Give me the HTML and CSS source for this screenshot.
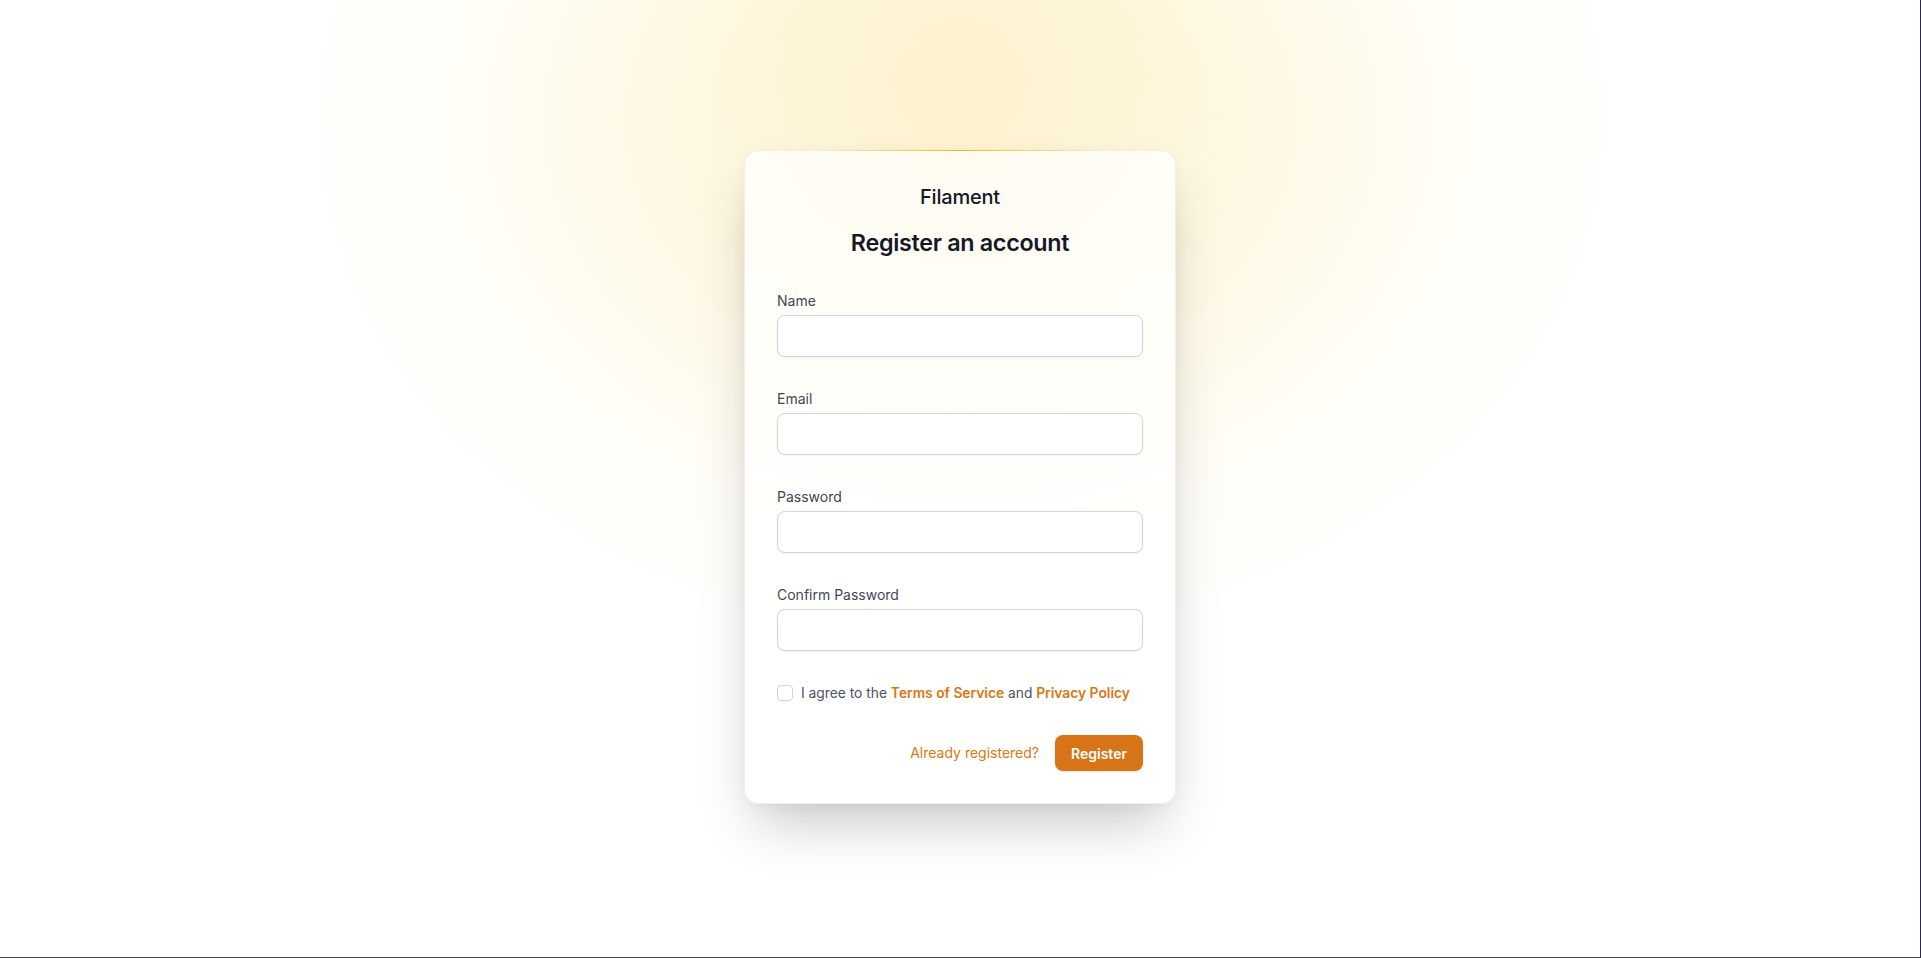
FILE: index.html
```html
<!DOCTYPE html>
<html lang="en">
<head>
<meta charset="utf-8">
<title>Register - Filament</title>
<link rel="stylesheet" href="styles.css">
</head>
<body>
<div class="frame">
  <main class="card">
    <div class="brand">Filament</div>
    <h1 class="title">Register an account</h1>
    <form class="form">
      <div class="field">
        <label class="label" for="name">Name</label>
        <input class="input" id="name" type="text">
      </div>
      <div class="field">
        <label class="label" for="email">Email</label>
        <input class="input" id="email" type="email">
      </div>
      <div class="field">
        <label class="label" for="password">Password</label>
        <input class="input" id="password" type="password">
      </div>
      <div class="field">
        <label class="label" for="confirm">Confirm Password</label>
        <input class="input" id="confirm" type="password">
      </div>
      <label class="agree">
        <span class="checkbox"></span>
        <span>I agree to the <a class="strong-link" href="#">Terms of Service</a> and <a class="strong-link" href="#">Privacy Policy</a></span>
      </label>
      <div class="actions">
        <a class="login-link" href="#">Already registered?</a>
        <button class="btn" type="button">Register</button>
      </div>
    </form>
  </main>
</div>
</body>
</html>
```
FILE: styles.css
```css
html, body {
  margin: 0;
  padding: 0;
}
body {
  font-family: "Inter", "Noto Sans", sans-serif;
  color: #111827;
  background-color: #ffffff;
  background-image:
    radial-gradient(ellipse 300px 180px at 50% 30px, rgba(251, 228, 160, 0.14), rgba(251, 228, 160, 0) 100%),
    radial-gradient(ellipse 700px 560px at 50% 120px, rgba(252, 234, 172, 0.55) 0%, rgba(252, 234, 172, 0.38) 35%, rgba(252, 234, 172, 0.12) 70%, rgba(252, 234, 172, 0) 100%);
  background-repeat: no-repeat;
}
.frame {
  box-sizing: border-box;
  height: 100vh;
  border-right: 1px solid #2b2553;
  border-bottom: 1px solid #444444;
  display: flex;
  flex-direction: column;
  align-items: center;
  padding-top: 150px;
}
.card {
  position: relative;
  box-sizing: border-box;
  width: 432px;
  padding: 32px;
  border-radius: 15px;
  background: rgba(255, 255, 255, 0.7);
  border: 1px solid rgba(0, 0, 0, 0.06);
  box-shadow: 0 30px 55px -12px rgba(0, 0, 0, 0.22), 0 4px 16px rgba(0, 0, 0, 0.03);
}
.card::before {
  content: "";
  position: absolute;
  top: -1px;
  left: 70px;
  right: 70px;
  height: 1px;
  background: linear-gradient(90deg, rgba(245, 180, 0, 0), rgba(245, 180, 0, 0.9) 50%, rgba(245, 180, 0, 0));
}
.brand {
  text-align: center;
  font-size: 20px;
  line-height: 28px;
  font-weight: 500;
  color: #161827;
  letter-spacing: -0.2px;
}
.title {
  margin: 16px 0 0;
  text-align: center;
  font-size: 23.3px;
  line-height: 32px;
  font-weight: 600;
  color: #161827;
  letter-spacing: -0.3px;
}
.form {
  margin-top: 32px;
  display: flex;
  flex-direction: column;
  gap: 32px;
}
.field {
  display: flex;
  flex-direction: column;
  gap: 4px;
}
.label {
  font-size: 14px;
  line-height: 20px;
  font-weight: 400;
  color: #3f4656;
}
.input {
  box-sizing: border-box;
  height: 42px;
  width: 100%;
  margin: 0;
  border: 1px solid #d3d5dc;
  border-radius: 8px;
  background: #ffffff;
  box-shadow: 0 1px 2px rgba(0, 0, 0, 0.06);
  font: inherit;
  padding: 0 12px;
}
.agree {
  display: flex;
  align-items: center;
  gap: 8px;
  font-size: 13.8px;
  line-height: 20px;
  color: #4b5263;
}
.checkbox {
  box-sizing: border-box;
  width: 16px;
  height: 16px;
  flex: none;
  border: 1px solid #d1d5db;
  border-radius: 4px;
  background: #ffffff;
  box-shadow: 0 1px 2px rgba(0, 0, 0, 0.05);
}
.strong-link {
  color: #d97712;
  font-weight: 600;
  text-decoration: none;
}
.actions {
  display: flex;
  justify-content: flex-end;
  align-items: center;
  gap: 16px;
}
.login-link {
  font-size: 14px;
  line-height: 20px;
  color: #d97712;
  text-decoration: none;
}
.btn {
  height: 36px;
  padding: 0 16px;
  border: none;
  border-radius: 8px;
  background: #d67417;
  color: #ffffff;
  font-family: inherit;
  font-size: 14px;
  font-weight: 600;
  box-shadow: 0 1px 2px rgba(0, 0, 0, 0.1);
}
```
